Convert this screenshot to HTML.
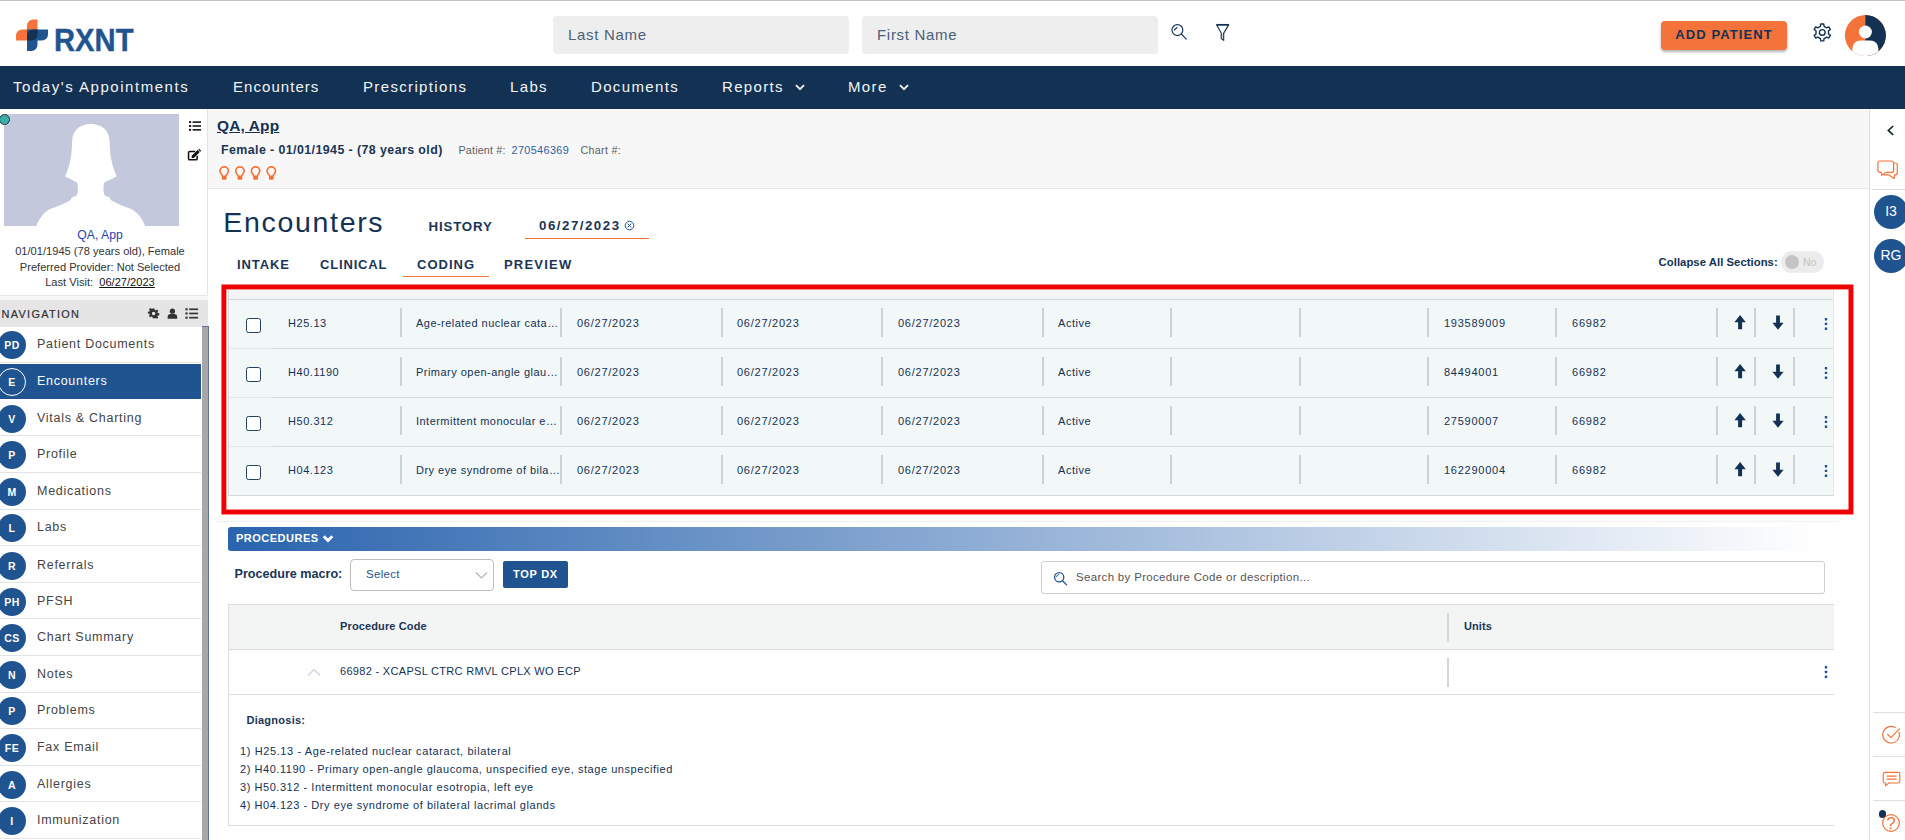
<!DOCTYPE html>
<html lang="en">
<head>
<meta charset="utf-8">
<title>RXNT - Encounters</title>
<style>
*{box-sizing:border-box;margin:0;padding:0}
html,body{width:1905px;height:840px;overflow:hidden;background:#fff;font-family:"Liberation Sans",sans-serif;color:#133253}
body{position:relative}
.abs{position:absolute}
.t{position:absolute;white-space:nowrap;line-height:1}
/* top header */
#topline{left:0;top:0;width:1905px;height:1px;background:#c0c2c1}
#header{left:0;top:1px;width:1905px;height:65px;background:#fff}
.logo-text{left:54.4px;top:26px;font-size:29.8px;font-weight:bold;color:#1f5490;transform:scale(.98,1.03);transform-origin:0 83%;-webkit-text-stroke:.35px #1f5490}
.sinput{top:16px;height:38px;width:296px;background:#eeeeee;border-radius:4px}
.sinput span{left:15px;top:11px;font-size:15px;letter-spacing:.7px;color:#4b6079}
#addp{left:1661px;top:21px;width:126px;height:29px;background:#f4733a;border-radius:4px;box-shadow:0 2px 3px rgba(0,0,0,.3)}
#addp span{left:0;width:126px;text-align:center;top:7px;font-size:13px;font-weight:bold;letter-spacing:1.1px;color:#133253}
/* navbar */
#navbar{left:0;top:66px;width:1905px;height:43px;z-index:2;background:#133253}
#navbar .t{top:13px;font-size:15px;letter-spacing:1.35px;color:#f4f4f4}
/* sidebar */
#sidebar{left:0;top:108px;width:208px;height:732px;background:#fff;border-right:1px solid #e4e4e4}
#photo{left:4px;top:114px;width:175px;height:112px;background:#c3c8dc;overflow:hidden}
.pinfo{left:0;width:200px;text-align:center;font-size:11.1px;color:#333}
#navhead{left:0;top:300px;width:208px;height:27px;background:#e5e5e5}
#navpre{left:0;top:295px;width:208px;height:5px;background:#f6f6f6;border-top:1px solid #e6e6e6}
#navhead .t{left:1.5px;top:9px;font-size:10.9px;letter-spacing:1.32px;color:#333;-webkit-text-stroke:.2px #333}
.ni{left:0;width:201px;height:36.6px;border-bottom:1px solid #e3e3e3;background:#fff}
.ni .c{left:-2px;top:4.5px;width:28px;height:28px;border-radius:50%;background:#1f5490;color:#fff;font-size:10.5px;font-weight:bold;text-align:center;line-height:29px;letter-spacing:.5px}
.ni .l{left:37px;top:11.5px;font-size:12.5px;letter-spacing:.72px;color:#444}
.ni.act{background:#1f5490;border-bottom-color:#1f5490;margin-top:1px;height:35px}
.ni.act .c{top:4px}
.ni.act .l{top:11px}
.ni.act .l{color:#fff}
.ni.act .c{border:1px solid #fff;line-height:27px}
#sscroll{left:202px;top:326px;width:7px;height:514px;background:#a7a7a7;border-top:1px solid #5b7390;border-right:1px solid #5b7390}
/* main */
#phead{left:208px;top:108px;width:1661px;height:81px;background:#f7f7f7;border-bottom:1px solid #e9e9e9}
#rside{left:1869px;top:108px;width:36px;height:732px;background:#fff;border-left:1.400px solid #dcdcdc}
.rc{width:34px;height:34px;border-radius:50%;background:#1f5490;color:#fff;font-size:14px;text-align:center;line-height:33px}
.tab{font-size:13px;font-weight:bold;letter-spacing:1.2px;color:#1b3556}
/* table 1 */
#redbox{left:222px;top:285px;width:1632px;height:230px;border:4px solid #f00000}
#t1{left:228px;top:289px;width:1606px;height:207px;background:#f2f7f8;border-left:1px solid #dcdcdc;border-right:1px solid #e3e8e9}
.hl{height:1px;background:#d5d9da}
.vs{width:2px;height:29px;background:#cfd2d3}
.cell{font-size:11px;letter-spacing:.55px;color:#133253}
.cb{left:246px;width:15px;height:15px;border:1.5px solid #24405f;border-radius:2.5px;background:#fff}
/* procedures */
#pbar{left:228px;top:527px;width:1606px;height:24px;border-radius:3px 0 0 3px;background:linear-gradient(90deg,#2a64ae 0%,#fff 99%)}
</style>
</head>
<body>
<div id="topline" class="abs"></div>
<div id="header" class="abs"></div>
<svg class="abs" style="left:14px;top:17px" width="38" height="36" viewBox="0 0 38 36">
<path d="M13 8.5a6 6 0 0 1 6-6h4.5v21H2V18.500a6 6 0 0 1 6-6h5z" fill="#f4733a"/>
<path d="M13 12.500h21V17.500a6 6 0 0 1-6 6h-4.500v4.500a6 6 0 0 1-6 6H13z" fill="#1f5490"/>
<path d="M13 18.500a6 6 0 0 1 6-6h4.500v5a6 6 0 0 1-6 6H13z" fill="#133253"/>
</svg>
<div class="t logo-text">RXNT</div>
<div class="abs sinput" style="left:553px"><span class="t">Last Name</span></div>
<div class="abs sinput" style="left:862px"><span class="t">First Name</span></div>
<svg class="abs" style="left:1165px;top:18px" width="28" height="28" viewBox="1165 18 28 28" fill="none" stroke="#133253" stroke-width="1.150" stroke-linecap="round"><circle cx="1177.400" cy="30.100" r="5.450"/><path d="M1181.300 34L1186.300 39.100"/><path d="M1174.500 29.800L1176.900 27.700"/></svg>
<svg class="abs" style="left:1210px;top:18px" width="26" height="28" viewBox="1210 18 26 28" fill="none" stroke="#133253" stroke-width="1.100" stroke-linejoin="round"><path d="M1221.200 33h2.500v7.300l-2.500-1.800z" fill="#cdd3da" stroke="none"/><path d="M1216.700 24.900H1228.700L1223.700 33.100V40.400L1221.200 38.600V33.100z"/><path d="M1216.500 24.700H1228.900" stroke-width="1.500"/></svg>
<div id="addp" class="abs"><span class="t">ADD PATIENT</span></div>
<svg class="abs" style="left:1812px;top:22px" width="20" height="21" viewBox="-0.615 -0.862 24.615 25.846" fill="none" stroke="#133253" stroke-width="1.700" stroke-linejoin="round"><circle cx="12" cy="12" r="3.500"/><path d="M9.80 4.41L10.12 1.57L13.88 1.57L14.20 4.41L17.47 6.30L20.10 5.16L21.97 8.41L19.67 10.12L19.67 13.88L21.97 15.59L20.10 18.84L17.47 17.70L14.20 19.59L13.88 22.43L10.12 22.43L9.80 19.59L6.53 17.70L3.90 18.84L2.03 15.59L4.33 13.88L4.33 10.12L2.03 8.41L3.90 5.16L6.53 6.30z"/></svg>
<svg class="abs" style="left:1844px;top:14px" width="43" height="43" viewBox="-0.4 -0.5 43 43"><defs><clipPath id="avc"><circle cx="21" cy="21" r="20.500"/></clipPath></defs><g clip-path="url(#avc)"><rect width="42" height="42" fill="#f4733a"/><rect x="21" width="21" height="42" fill="#133253"/><circle cx="21" cy="17.500" r="6.500" fill="#fff"/><path d="M8 42v-8a8 8 0 0 1 8-8h10a8 8 0 0 1 8 8v8z" fill="#fff"/></g></svg>

<div id="navbar" class="abs">
<div class="t" style="left:13px;letter-spacing:1.54px">Today's Appointments</div>
<div class="t" style="left:233px;letter-spacing:1.05px">Encounters</div>
<div class="t" style="left:363px">Prescriptions</div>
<div class="t" style="left:510px">Labs</div>
<div class="t" style="left:591px">Documents</div>
<div class="t" style="left:722px">Reports</div>
<svg class="abs" style="left:794px;top:17px" width="12" height="9" viewBox="0 0 12 9" fill="none" stroke="#f4f4f4" stroke-width="1.800"><path d="M2 2.200l4 4 4-4"/></svg>
<div class="t" style="left:848px">More</div>
<svg class="abs" style="left:898px;top:17px" width="12" height="9" viewBox="0 0 12 9" fill="none" stroke="#f4f4f4" stroke-width="1.800"><path d="M2 2.200l4 4 4-4"/></svg>

</div>
<div id="sidebar" class="abs"></div>
<div id="photo" class="abs"><svg width="175" height="112" viewBox="0 0 175 112"><path d="M86.700 9.900C76 9.900 68.500 16 68.100 27c-.3 8-.6 13-1.400 17C65.500 51 63.500 57 61 62.400L73.100 68.600c.9 3.400 1.100 7.400.4 10.400-.3 1.500-.7 2.300-1.100 2.700L67.600 83.500 66.700 86C60 90 53 92.500 47.400 94.600 43 96.500 40 99.500 38.100 101.700 35 105.500 33.200 109 32.400 112H141c-.8-3-2.600-6.500-5.700-10.300-1.900-2.200-4.900-5.200-9.300-7.100-5.600-2.100-12.600-4.600-19.300-8.600l-.9-2.500-4.800-1.800c-.4-.4-.8-1.200-1.100-2.700-.7-3-.5-7 .4-10.400L112.700 62.400C110.200 57 108.200 51 107 44c-.8-4-1.100-9-1.400-17C105.200 16 97.700 9.900 86.700 9.900z" fill="#fff"/></svg></div>
<div class="abs" style="left:-1px;top:114px;width:11px;height:11px;border-radius:50%;background:#3aafa9;border:1px solid #1b3a3a"></div>
<svg class="abs" style="left:189px;top:120px" width="12" height="11" viewBox="0 -0.700 13.500 11.400" preserveAspectRatio="none" fill="#111"><rect x="0" y="0.500" width="2.400" height="2"/><rect x="4" y="0.700" width="9.500" height="1.600"/><rect x="0" y="4.500" width="2.400" height="2"/><rect x="4" y="4.700" width="9.500" height="1.600"/><rect x="0" y="8.500" width="2.400" height="2"/><rect x="4" y="8.700" width="9.500" height="1.600"/></svg>
<svg class="abs" style="left:187px;top:148px" width="15" height="13" viewBox="-0.200 -1.200 16.700 14.500"><path d="M9 2.800H2.800A1.300 1.300 0 0 0 1.500 4.100v6.600A1.300 1.300 0 0 0 2.800 12h7A1.300 1.300 0 0 0 11.100 10.700V7.500" fill="none" stroke="#111" stroke-width="1.700"/><path d="M5.300 7.300L11.600 1l2.400 2.400-6.300 6.300-2.900.6z" fill="#111"/><path d="M12.300.500l1-.8 2.300 2.300-.9 1z" fill="#111"/></svg>
<div class="t pinfo" style="top:229px;font-size:12.200px;color:#2a3fb0">QA, App</div>
<div class="t pinfo" style="top:246px">01/01/1945 (78 years old), Female</div>
<div class="t pinfo" style="top:262px">Preferred Provider: Not Selected</div>
<div class="t pinfo" style="top:277px">Last Visit:&nbsp; <span style="text-decoration:underline;color:#111">06/27/2023</span></div>
<div id="navpre" class="abs"></div>
<div id="navhead" class="abs"><span class="t">NAVIGATION</span>
<svg class="abs" style="left:140px;top:0px" width="68" height="27" viewBox="140 300 68 27" fill="#333">
<g transform="translate(148.100 308.100) scale(.445)"><path fill-rule="evenodd" d="M10 1h4l.7 3.300 2 .9 2.900-1.800 2.800 2.800-1.800 2.900.9 2 3.300.7v4l-3.300.7-.9 2 1.800 2.900-2.800 2.800-2.900-1.800-2 .9L14 23h-4l-.7-3.300-2-.9-2.900 1.800-2.800-2.800 1.800-2.900-.9-2L-.800 12.200v-4l3.300-.700.9-2-1.800-2.900 2.800-2.800 2.900 1.800 2-.9zM12 8a4 4 0 1 0 0 8 4 4 0 0 0 0-8z" transform="translate(0.400 0)"/></g>
<g transform="translate(167.200 308.400) scale(.87)"><circle cx="6" cy="3.200" r="3"/><path d="M0.500 12V10a3.500 3.500 0 0 1 3.500-3.500h4A3.500 3.500 0 0 1 11.500 10v2z"/></g>
<g transform="translate(185.400 307.700) scale(.94 1.05)"><rect x="0" y="0.500" width="2.400" height="2"/><rect x="4" y="0.700" width="9.500" height="1.600"/><rect x="0" y="4.500" width="2.400" height="2"/><rect x="4" y="4.700" width="9.500" height="1.600"/><rect x="0" y="8.500" width="2.400" height="2"/><rect x="4" y="8.700" width="9.500" height="1.600"/></g>
</svg>
</div>
<div class="abs ni" style="top:326.7px"><span class="abs c">PD</span><span class="t l">Patient Documents</span></div>
<div class="abs ni act" style="top:363.3px"><span class="abs c">E</span><span class="t l">Encounters</span></div>
<div class="abs ni" style="top:399.9px"><span class="abs c" style="top:5.5px">V</span><span class="t l" style="top:12.5px">Vitals &amp; Charting</span></div>
<div class="abs ni" style="top:436.5px"><span class="abs c">P</span><span class="t l">Profile</span></div>
<div class="abs ni" style="top:473.1px"><span class="abs c">M</span><span class="t l">Medications</span></div>
<div class="abs ni" style="top:509.7px"><span class="abs c">L</span><span class="t l">Labs</span></div>
<div class="abs ni" style="top:546.3px"><span class="abs c" style="top:5.5px">R</span><span class="t l" style="top:12.5px">Referrals</span></div>
<div class="abs ni" style="top:582.9px"><span class="abs c" style="top:5.5px">PH</span><span class="t l" style="top:12.5px">PFSH</span></div>
<div class="abs ni" style="top:619.5px"><span class="abs c">CS</span><span class="t l">Chart Summary</span></div>
<div class="abs ni" style="top:656.1px"><span class="abs c">N</span><span class="t l">Notes</span></div>
<div class="abs ni" style="top:692.7px"><span class="abs c">P</span><span class="t l">Problems</span></div>
<div class="abs ni" style="top:729.3px"><span class="abs c">FE</span><span class="t l">Fax Email</span></div>
<div class="abs ni" style="top:765.9px"><span class="abs c" style="top:5.5px">A</span><span class="t l" style="top:12.5px">Allergies</span></div>
<div class="abs ni" style="top:802.5px"><span class="abs c">I</span><span class="t l">Immunization</span></div>
<div class="abs ni" style="top:839.1px"><span class="abs c">D</span><span class="t l">Demographics</span></div>
<div id="sscroll" class="abs"></div>

<div id="phead" class="abs"></div>
<div class="t" id="pname" style="left:217px;top:118.300px;font-size:15.450px;letter-spacing:.16px;font-weight:bold;text-decoration:underline;color:#133253">QA, App</div>
<div class="t" id="pdemo" style="left:221px;top:143.500px;font-size:12.400px;font-weight:bold;letter-spacing:.42px;color:#1b3556">Female - 01/01/1945 - (78 years old)</div>
<div class="t ps" id="pn1" style="left:458.500px;top:144.500px;font-size:10.800px;letter-spacing:.15px;color:#5e5e5e">Patient #:</div>
<div class="t ps" id="pn2" style="left:511.500px;top:144.500px;font-size:10.800px;letter-spacing:.4px;color:#2b5f9e">270546369</div>
<div class="t ps" id="pn3" style="left:580.500px;top:144.500px;font-size:10.800px;letter-spacing:.25px;color:#5e5e5e">Chart #:</div>

<svg class="abs" style="left:218px;top:165px" width="12" height="16" viewBox="-0.7 -0.55 12 16"><path d="M3.900 10.800C3.700 8.900 1.300 8.100 1.300 5.500a4.200 4.200 0 0 1 8.400 0c0 2.600-2.400 3.400-2.600 5.300z" fill="none" stroke="#f4733a" stroke-width="1.650"/><rect x="3.200" y="10.600" width="4.600" height="3.700" rx="1.200" fill="#f4733a"/></svg>
<svg class="abs" style="left:234px;top:165px" width="12" height="16" viewBox="-0.4 -0.55 12 16"><path d="M3.900 10.800C3.700 8.900 1.300 8.100 1.300 5.500a4.200 4.200 0 0 1 8.400 0c0 2.600-2.400 3.400-2.600 5.300z" fill="none" stroke="#f4733a" stroke-width="1.650"/><rect x="3.200" y="10.600" width="4.600" height="3.700" rx="1.200" fill="#f4733a"/></svg>
<svg class="abs" style="left:250px;top:165px" width="12" height="16" viewBox="-0.1 -0.55 12 16"><path d="M3.900 10.800C3.700 8.900 1.300 8.100 1.300 5.500a4.200 4.200 0 0 1 8.400 0c0 2.600-2.400 3.400-2.600 5.300z" fill="none" stroke="#f4733a" stroke-width="1.650"/><rect x="3.200" y="10.600" width="4.600" height="3.700" rx="1.200" fill="#f4733a"/></svg>
<svg class="abs" style="left:265px;top:165px" width="12" height="16" viewBox="-0.8 -0.55 12 16"><path d="M3.900 10.800C3.700 8.900 1.300 8.100 1.300 5.500a4.200 4.200 0 0 1 8.400 0c0 2.600-2.400 3.400-2.600 5.300z" fill="none" stroke="#f4733a" stroke-width="1.650"/><rect x="3.200" y="10.600" width="4.600" height="3.700" rx="1.200" fill="#f4733a"/></svg>
<div class="t" id="ench" style="left:223.300px;top:208px;font-size:28.500px;letter-spacing:1.68px;color:#133253">Encounters</div>
<div class="t tab" id="hist" style="left:428.500px;top:219.500px;font-size:13.300px;letter-spacing:.82px">HISTORY</div>
<div class="t tab" id="edate" style="left:539px;top:218.500px;font-size:13.300px;letter-spacing:1.5px">06/27/2023</div>
<svg class="abs" style="left:624px;top:220px" width="11" height="11" viewBox="0 0 11 11" fill="none" stroke="#1f5490" stroke-width="1"><circle cx="5.500" cy="5.500" r="4.300"/><path d="M3.700 3.700l3.600 3.600M7.300 3.700l-3.600 3.600"/></svg>
<div class="abs" style="left:525px;top:238px;width:124px;height:1px;background:#f4733a"></div>
<div class="t tab" id="tb1" style="left:237px;top:258px;letter-spacing:.92px">INTAKE</div>
<div class="t tab" id="tb2" style="left:320px;top:258px;letter-spacing:.83px">CLINICAL</div>
<div class="t tab" id="tb3" style="left:417px;top:258px;letter-spacing:1px">CODING</div>
<div class="t tab" id="tb4" style="left:504px;top:258px">PREVIEW</div>
<div class="abs" style="left:403px;top:276px;width:86px;height:1px;background:#f4733a"></div>
<div class="t" id="coll" style="left:1658.6px;top:257px;letter-spacing:.04px;font-size:11.300px;font-weight:bold;color:#133253">Collapse All Sections:</div>
<div class="abs" style="left:1781px;top:251px;width:43px;height:22px;border-radius:11px;background:#ececec"></div>
<div class="abs" style="left:1785px;top:255px;width:14px;height:14px;border-radius:50%;background:#c4c4c4"></div>
<div class="t" style="left:1803px;top:257px;font-size:10.500px;color:#c2c2c2">No</div>

<div id="t1" class="abs"></div>
<div class="abs" style="left:229px;top:289px;width:1604px;height:10px;background:#f3f5f5"></div>
<div class="abs hl" style="left:229px;top:299px;width:1604px"></div>
<div class="abs cb" style="top:318px"></div>
<div class="t cell" style="left:288px;top:318px">H25.13</div>
<div class="t cell" style="left:416px;top:318px;letter-spacing:.47px">Age-related nuclear cata…</div>
<div class="t cell" style="left:577px;top:318px;letter-spacing:.75px">06/27/2023</div>
<div class="t cell" style="left:737px;top:318px;letter-spacing:.75px">06/27/2023</div>
<div class="t cell" style="left:898px;top:318px;letter-spacing:.75px">06/27/2023</div>
<div class="t cell" style="left:1058px;top:318px">Active</div>
<div class="t cell" style="left:1444px;top:318px;letter-spacing:.75px">193589009</div>
<div class="t cell" style="left:1572px;top:318px;letter-spacing:.8px">66982</div>
<div class="abs vs" style="left:400px;top:308px"></div>
<div class="abs vs" style="left:560px;top:308px"></div>
<div class="abs vs" style="left:721px;top:308px"></div>
<div class="abs vs" style="left:881px;top:308px"></div>
<div class="abs vs" style="left:1042px;top:308px"></div>
<div class="abs vs" style="left:1170px;top:308px"></div>
<div class="abs vs" style="left:1299px;top:308px"></div>
<div class="abs vs" style="left:1427px;top:308px"></div>
<div class="abs vs" style="left:1555px;top:308px"></div>
<div class="abs vs" style="left:1716px;top:308px"></div>
<div class="abs vs" style="left:1754px;top:308px"></div>
<div class="abs vs" style="left:1793px;top:308px"></div>
<svg class="abs" style="left:1734px;top:314px" width="12" height="16" viewBox="0 -0.8 12 16" fill="#133253"><path d="M6.100 0.300L11.800 7.500H8.100V14.500H4.100V7.500H0.400z"/></svg>
<svg class="abs" style="left:1772px;top:315px" width="12" height="16" viewBox="0 -0.3 12 16" fill="#133253"><path d="M6 14.500L11.600 7.400H7.900V0.300H4.100V7.400H0.400z"/></svg>
<svg class="abs" style="left:1824px;top:316px" width="4" height="15" viewBox="0 -0.9 4 15" fill="#1f5490"><rect x="0.800" y="1.100" width="2.400" height="2.400" rx=".35"/><rect x="0.800" y="5.800" width="2.400" height="2.400" rx=".35"/><rect x="0.800" y="10.600" width="2.400" height="2.400" rx=".35"/></svg>
<div class="abs hl" style="left:229px;top:348px;width:44px;background:#e4e9ea"></div>
<div class="abs hl" style="left:273px;top:348px;width:1560px"></div>
<div class="abs cb" style="top:367px"></div>
<div class="t cell" style="left:288px;top:367px">H40.1190</div>
<div class="t cell" style="left:416px;top:367px;letter-spacing:.47px">Primary open-angle glau…</div>
<div class="t cell" style="left:577px;top:367px;letter-spacing:.75px">06/27/2023</div>
<div class="t cell" style="left:737px;top:367px;letter-spacing:.75px">06/27/2023</div>
<div class="t cell" style="left:898px;top:367px;letter-spacing:.75px">06/27/2023</div>
<div class="t cell" style="left:1058px;top:367px">Active</div>
<div class="t cell" style="left:1444px;top:367px;letter-spacing:.75px">84494001</div>
<div class="t cell" style="left:1572px;top:367px;letter-spacing:.8px">66982</div>
<div class="abs vs" style="left:400px;top:357px"></div>
<div class="abs vs" style="left:560px;top:357px"></div>
<div class="abs vs" style="left:721px;top:357px"></div>
<div class="abs vs" style="left:881px;top:357px"></div>
<div class="abs vs" style="left:1042px;top:357px"></div>
<div class="abs vs" style="left:1170px;top:357px"></div>
<div class="abs vs" style="left:1299px;top:357px"></div>
<div class="abs vs" style="left:1427px;top:357px"></div>
<div class="abs vs" style="left:1555px;top:357px"></div>
<div class="abs vs" style="left:1716px;top:357px"></div>
<div class="abs vs" style="left:1754px;top:357px"></div>
<div class="abs vs" style="left:1793px;top:357px"></div>
<svg class="abs" style="left:1734px;top:363px" width="12" height="16" viewBox="0 -0.8 12 16" fill="#133253"><path d="M6.100 0.300L11.800 7.500H8.100V14.500H4.100V7.500H0.400z"/></svg>
<svg class="abs" style="left:1772px;top:364px" width="12" height="16" viewBox="0 -0.3 12 16" fill="#133253"><path d="M6 14.500L11.600 7.400H7.900V0.300H4.100V7.400H0.400z"/></svg>
<svg class="abs" style="left:1824px;top:365px" width="4" height="15" viewBox="0 -0.9 4 15" fill="#1f5490"><rect x="0.800" y="1.100" width="2.400" height="2.400" rx=".35"/><rect x="0.800" y="5.800" width="2.400" height="2.400" rx=".35"/><rect x="0.800" y="10.600" width="2.400" height="2.400" rx=".35"/></svg>
<div class="abs hl" style="left:229px;top:397px;width:44px;background:#e4e9ea"></div>
<div class="abs hl" style="left:273px;top:397px;width:1560px"></div>
<div class="abs cb" style="top:416px"></div>
<div class="t cell" style="left:288px;top:416px">H50.312</div>
<div class="t cell" style="left:416px;top:416px;letter-spacing:.47px">Intermittent monocular e…</div>
<div class="t cell" style="left:577px;top:416px;letter-spacing:.75px">06/27/2023</div>
<div class="t cell" style="left:737px;top:416px;letter-spacing:.75px">06/27/2023</div>
<div class="t cell" style="left:898px;top:416px;letter-spacing:.75px">06/27/2023</div>
<div class="t cell" style="left:1058px;top:416px">Active</div>
<div class="t cell" style="left:1444px;top:416px;letter-spacing:.75px">27590007</div>
<div class="t cell" style="left:1572px;top:416px;letter-spacing:.8px">66982</div>
<div class="abs vs" style="left:400px;top:406px"></div>
<div class="abs vs" style="left:560px;top:406px"></div>
<div class="abs vs" style="left:721px;top:406px"></div>
<div class="abs vs" style="left:881px;top:406px"></div>
<div class="abs vs" style="left:1042px;top:406px"></div>
<div class="abs vs" style="left:1170px;top:406px"></div>
<div class="abs vs" style="left:1299px;top:406px"></div>
<div class="abs vs" style="left:1427px;top:406px"></div>
<div class="abs vs" style="left:1555px;top:406px"></div>
<div class="abs vs" style="left:1716px;top:406px"></div>
<div class="abs vs" style="left:1754px;top:406px"></div>
<div class="abs vs" style="left:1793px;top:406px"></div>
<svg class="abs" style="left:1734px;top:412px" width="12" height="16" viewBox="0 -0.8 12 16" fill="#133253"><path d="M6.100 0.300L11.800 7.500H8.100V14.500H4.100V7.500H0.400z"/></svg>
<svg class="abs" style="left:1772px;top:413px" width="12" height="16" viewBox="0 -0.3 12 16" fill="#133253"><path d="M6 14.500L11.600 7.400H7.900V0.300H4.100V7.400H0.400z"/></svg>
<svg class="abs" style="left:1824px;top:414px" width="4" height="15" viewBox="0 -0.9 4 15" fill="#1f5490"><rect x="0.800" y="1.100" width="2.400" height="2.400" rx=".35"/><rect x="0.800" y="5.800" width="2.400" height="2.400" rx=".35"/><rect x="0.800" y="10.600" width="2.400" height="2.400" rx=".35"/></svg>
<div class="abs hl" style="left:229px;top:446px;width:44px;background:#e4e9ea"></div>
<div class="abs hl" style="left:273px;top:446px;width:1560px"></div>
<div class="abs cb" style="top:465px"></div>
<div class="t cell" style="left:288px;top:465px">H04.123</div>
<div class="t cell" style="left:416px;top:465px;letter-spacing:.47px">Dry eye syndrome of bila…</div>
<div class="t cell" style="left:577px;top:465px;letter-spacing:.75px">06/27/2023</div>
<div class="t cell" style="left:737px;top:465px;letter-spacing:.75px">06/27/2023</div>
<div class="t cell" style="left:898px;top:465px;letter-spacing:.75px">06/27/2023</div>
<div class="t cell" style="left:1058px;top:465px">Active</div>
<div class="t cell" style="left:1444px;top:465px;letter-spacing:.75px">162290004</div>
<div class="t cell" style="left:1572px;top:465px;letter-spacing:.8px">66982</div>
<div class="abs vs" style="left:400px;top:455px"></div>
<div class="abs vs" style="left:560px;top:455px"></div>
<div class="abs vs" style="left:721px;top:455px"></div>
<div class="abs vs" style="left:881px;top:455px"></div>
<div class="abs vs" style="left:1042px;top:455px"></div>
<div class="abs vs" style="left:1170px;top:455px"></div>
<div class="abs vs" style="left:1299px;top:455px"></div>
<div class="abs vs" style="left:1427px;top:455px"></div>
<div class="abs vs" style="left:1555px;top:455px"></div>
<div class="abs vs" style="left:1716px;top:455px"></div>
<div class="abs vs" style="left:1754px;top:455px"></div>
<div class="abs vs" style="left:1793px;top:455px"></div>
<svg class="abs" style="left:1734px;top:461px" width="12" height="16" viewBox="0 -0.8 12 16" fill="#133253"><path d="M6.100 0.300L11.800 7.500H8.100V14.500H4.100V7.500H0.400z"/></svg>
<svg class="abs" style="left:1772px;top:462px" width="12" height="16" viewBox="0 -0.3 12 16" fill="#133253"><path d="M6 14.500L11.600 7.400H7.900V0.300H4.100V7.400H0.400z"/></svg>
<svg class="abs" style="left:1824px;top:463px" width="4" height="15" viewBox="0 -0.9 4 15" fill="#1f5490"><rect x="0.800" y="1.100" width="2.400" height="2.400" rx=".35"/><rect x="0.800" y="5.800" width="2.400" height="2.400" rx=".35"/><rect x="0.800" y="10.600" width="2.400" height="2.400" rx=".35"/></svg>
<div class="abs hl" style="left:228px;top:495px;width:1606px"></div>
<svg class="abs" style="left:215px;top:280px" width="1645" height="240" viewBox="215 280 1645 240"><rect x="223.900" y="286.950" width="1627.050" height="225.050" fill="none" stroke="#f00000" stroke-width="4.900"/></svg>

<div class="abs" style="left:215px;top:515px;width:1624px;height:7px;background:#fbfbfb;border-bottom:1px solid #f1f1f1"></div>
<div id="pbar" class="abs"></div>
<div class="t" id="ptitle" style="left:236px;top:533px;font-size:11px;font-weight:bold;letter-spacing:.5px;color:#fff">PROCEDURES</div>
<svg class="abs" style="left:322px;top:534px" width="12" height="10" viewBox="0 -0.5 12 10" fill="none" stroke="#fff" stroke-width="2.800"><path d="M1.700 1.700L6 6 10.300 1.700"/></svg>
<div class="t" id="pmacro" style="left:234.500px;top:568px;font-size:12.600px;font-weight:bold;color:#1b3556">Procedure macro:</div>
<div class="abs" style="left:350px;top:559px;width:144px;height:32px;border:1px solid #bdbdbd;border-radius:4px;background:#fff"></div>
<div class="t" style="left:366px;top:568.500px;font-size:11.500px;letter-spacing:.3px;color:#1f5490">Select</div>
<svg class="abs" style="left:475px;top:571px" width="13" height="9" viewBox="0 0 13 9" fill="none" stroke="#b3b3b3" stroke-width="1.200"><path d="M1 1.500L6.500 7 12 1.500"/></svg>
<div class="abs" style="left:503px;top:561px;width:65px;height:27px;background:#1f5490;border-radius:2px"></div>
<div class="t" id="topdx" style="left:503px;width:65px;text-align:center;top:569px;font-size:11px;font-weight:bold;letter-spacing:.7px;color:#fff">TOP DX</div>
<div class="abs" style="left:1041px;top:561px;width:784px;height:33px;border:1px solid #cfcfcf;border-radius:3px;background:#fff"></div>
<svg class="abs" style="left:1053px;top:571px" width="15" height="15" viewBox="0 0 15 15" fill="none" stroke="#1f5490" stroke-width="1.300"><circle cx="6.200" cy="6.200" r="4.600"/><path d="M9.600 9.700l4 4.200" stroke-linecap="round"/><path d="M3.500 6.200a2.700 2.700 0 0 1 2.700-2.700" stroke-width=".9"/></svg>
<div class="t" id="psearch" style="left:1076px;top:572px;font-size:11.500px;letter-spacing:.32px;color:#555">Search by Procedure Code or description...</div>
<div class="abs" style="left:228px;top:604px;width:1606px;height:46px;background:#f3f5f5;border:1px solid #dcdcdc;border-right:none"></div>
<div class="t" id="pch" style="left:340px;top:621px;font-size:11px;font-weight:bold;letter-spacing:.13px;color:#1b3556">Procedure Code</div>
<div class="abs vs" style="left:1447px;top:613px;background:#d4d6d6"></div>
<div class="t" id="units" style="left:1464px;top:621px;font-size:11px;font-weight:bold;letter-spacing:.07px;color:#1b3556">Units</div>
<div class="abs" style="left:228px;top:650px;width:1px;height:176px;background:#dcdcdc"></div>
<svg class="abs" style="left:307px;top:668px" width="14" height="9" viewBox="0 0 14 9" fill="none" stroke="#c9d0e0" stroke-width="1.200"><path d="M1 7.500L7 1.500 13 7.500"/></svg>
<div class="t cell" id="prow" style="left:340px;top:666px;letter-spacing:.31px">66982 - XCAPSL CTRC RMVL CPLX WO ECP</div>
<div class="abs vs" style="left:1447px;top:658px;background:#d4d6d6"></div>
<svg class="abs" style="left:1824px;top:665.0px" width="4" height="14" viewBox="0 0 4 14" fill="#1f5490"><rect x="0.800" y="1.100" width="2.400" height="2.400" rx=".35"/><rect x="0.800" y="5.800" width="2.400" height="2.400" rx=".35"/><rect x="0.800" y="10.600" width="2.400" height="2.400" rx=".35"/></svg>
<div class="abs hl" style="left:228px;top:694px;width:1606px;background:#dcdcdc"></div>
<div class="t" id="diag" style="left:246.500px;top:715px;font-size:11px;font-weight:bold;letter-spacing:.25px;color:#1b3556">Diagnosis:</div>
<div class="t cell dx" style="left:240px;top:746px;letter-spacing:.61px">1) H25.13 - Age-related nuclear cataract, bilateral</div>
<div class="t cell dx" style="left:240px;top:764px">2) H40.1190 - Primary open-angle glaucoma, unspecified eye, stage unspecified</div>
<div class="t cell dx" style="left:240px;top:782px">3) H50.312 - Intermittent monocular esotropia, left eye</div>
<div class="t cell dx" style="left:240px;top:800px">4) H04.123 - Dry eye syndrome of bilateral lacrimal glands</div>
<div class="abs hl" style="left:228px;top:825px;width:1606px;background:#dcdcdc"></div>

<div id="rside" class="abs"></div>
<svg class="abs" style="left:1880px;top:120px" width="20" height="20" viewBox="1880 120 20 20" fill="none" stroke="#0b2a22" stroke-width="1.600"><path d="M1893.200 126L1888.300 130.400 1893.200 134.800"/></svg>
<svg class="abs" style="left:1874px;top:157px" width="28" height="26" viewBox="1874 157 28 26" fill="none" stroke="#f4733a" stroke-width="1.200" stroke-linejoin="round"><path d="M1879.900 161H1891.600a2 2 0 0 1 2 2V170.300a2 2 0 0 1-2 2H1886l-4.300 3-.6-3H1879.900a2 2 0 0 1-2-2V163a2 2 0 0 1 2-2z"/><path d="M1894.300 163h1a2 2 0 0 1 2 2v7.800a2 2 0 0 1-2 2h-.6l-.6 3.700-5.500-3.700h-5.300"/></svg>
<div class="abs" style="left:1872px;top:189px;width:33px;height:1px;background:#dedede"></div>
<div class="abs rc" style="left:1874px;top:195px">I3</div>
<div class="abs rc" style="left:1874px;top:239px">RG</div>
<div class="abs" style="left:1873px;top:712px;width:32px;height:1px;background:#e0e0e0"></div>
<svg class="abs" style="left:1881px;top:725px" width="21" height="20" viewBox="-0.7 0 21 20" fill="none" stroke="#f4733a" stroke-width="1.200" stroke-linecap="round" stroke-linejoin="round"><path d="M17.300 7.200A8.300 8.300 0 1 1 13.500 2.500"/><path d="M6 9.500l3.200 3.200L17.800 3.800"/></svg>
<div class="abs" style="left:1873px;top:756px;width:32px;height:1px;background:#e0e0e0"></div>
<svg class="abs" style="left:1882px;top:771px" width="19" height="17" viewBox="-0.324 -0.541 20.541 18.408" fill="none" stroke="#f4733a" stroke-width="1.250" stroke-linejoin="round"><path d="M3 1h14a2 2 0 0 1 2 2v7.500a2 2 0 0 1-2 2H7l-3.500 3v-3H3a2 2 0 0 1-2-2V3a2 2 0 0 1 2-2z"/><path d="M5 5h10M5 8.300h10" stroke-linecap="round"/></svg>
<div class="abs" style="left:1873px;top:800px;width:32px;height:1px;background:#e0e0e0"></div>
<div class="abs" style="left:1878.500px;top:810px;width:7.500px;height:7.500px;border-radius:50%;background:#133253"></div>
<svg class="abs" style="left:1881px;top:813px" width="20" height="20" viewBox="0 0 20 20" fill="none" stroke="#f4733a" stroke-width="1.250"><circle cx="10" cy="10" r="8.300"/></svg>
<div class="t" style="left:1886.300px;top:814.500px;font-size:17px;color:#f4733a">?</div>

</body>
</html>
